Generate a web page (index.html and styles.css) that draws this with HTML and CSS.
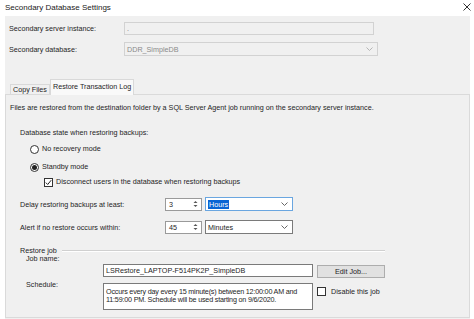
FILE: index.html
```html
<!DOCTYPE html>
<html lang="en">
<head>
    <meta charset="UTF-8">
    <title>Secondary Database Settings</title>
    <link rel="stylesheet" href="styles.css">
</head>
<body>
    <div class="titlebar">
        <span class="title">Secondary Database Settings</span>
        <svg class="close" width="8" height="8" viewBox="0 0 8 8">
            <path d="M0.5 0.5 L7.5 7.5 M7.5 0.5 L0.5 7.5" stroke="#333" stroke-width="1"/>
        </svg>
    </div>

    <div class="dialog">
        <div class="top">
            <div class="field-row">
                <label class="field-label">Secondary server instance:</label>
                <div class="textbox disabled wide">.</div>
            </div>
            <div class="field-row second">
                <label class="field-label">Secondary database:</label>
                <div class="combo disabled wider">
                    <span>DDR_SimpleDB</span>
                    <svg class="chev" width="7" height="4" viewBox="0 0 7 4"><path d="M0.5 0.5 L3.5 3.5 L6.5 0.5" fill="none" stroke="#b5b5b5"/></svg>
                </div>
            </div>
        </div>

        <div class="tabs">
            <div class="tab">Copy Files</div>
            <div class="tab active">Restore Transaction Log</div>
        </div>

        <div class="panel">
            <div class="line intro">Files are restored from the destination folder by a SQL Server Agent job running on the secondary server instance.</div>
            <div class="line section">Database state when restoring backups:</div>

            <div class="line option radio-row first">
                <span class="radio"></span>
                <span>No recovery mode</span>
            </div>
            <div class="line option radio-row">
                <span class="radio checked"></span>
                <span>Standby mode</span>
            </div>
            <div class="line option check-row">
                <span class="checkbox">
                    <svg width="7" height="7" viewBox="0 0 7 7"><path d="M0.8 3.6 L2.7 5.5 L6.2 1.2" fill="none" stroke="#222" stroke-width="1"/></svg>
                </span>
                <span>Disconnect users in the database when restoring backups</span>
            </div>

            <div class="input-row delay">
                <label class="row-label">Delay restoring backups at least:</label>
                <div class="spinner">
                    <span>3</span>
                    <svg class="arrows" width="5" height="8" viewBox="0 0 5 8"><path d="M0.5 3 L2.5 1 L4.5 3 Z M0.5 5 L2.5 7 L4.5 5 Z" fill="#555"/></svg>
                </div>
                <div class="combo focused unit">
                    <span class="selected">Hours</span>
                    <svg class="chev" width="7" height="4" viewBox="0 0 7 4"><path d="M0.5 0.5 L3.5 3.5 L6.5 0.5" fill="none" stroke="#666"/></svg>
                </div>
            </div>
            <div class="input-row alert">
                <label class="row-label">Alert if no restore occurs within:</label>
                <div class="spinner">
                    <span>45</span>
                    <svg class="arrows" width="5" height="8" viewBox="0 0 5 8"><path d="M0.5 3 L2.5 1 L4.5 3 Z M0.5 5 L2.5 7 L4.5 5 Z" fill="#555"/></svg>
                </div>
                <div class="combo unit">
                    <span>Minutes</span>
                    <svg class="chev" width="7" height="4" viewBox="0 0 7 4"><path d="M0.5 0.5 L3.5 3.5 L6.5 0.5" fill="none" stroke="#666"/></svg>
                </div>
            </div>

            <div class="group-head">
                <span>Restore job</span>
                <span class="rule"></span>
            </div>

            <div class="job-row">
                <label class="job-label">Job name:</label>
                <div class="textbox job-name">LSRestore_LAPTOP-F514PK2P_SimpleDB</div>
                <button class="btn">Edit Job...</button>
            </div>
            <div class="job-row schedule-row">
                <label class="job-label">Schedule:</label>
                <div class="textbox schedule">Occurs every day every 15 minute(s) between 12:00:00 AM and<br>11:59:00 PM. Schedule will be used starting on 9/6/2020.</div>
                <div class="disable">
                    <span class="checkbox"></span>
                    <span>Disable this job</span>
                </div>
            </div>
        </div>
    </div>
</body>
</html>
```

FILE: styles.css
```css
body {
    margin: 0;
    background: #ffffff;
    font-family: "Liberation Sans", Arial, sans-serif;
    font-size: 7.2px;
    color: #1e1e1e;
    width: 474px;
    height: 319px;
    overflow: hidden;
}
.titlebar {
    height: 16px;
    display: flex;
    justify-content: space-between;
    align-items: center;
    padding: 0 3px 2px 5px;
    box-sizing: border-box;
}
.title {
    font-size: 8px;
    color: #222;
}
.close {
    display: block;
}
.dialog {
    background: #f0f0f0;
    margin: 0 4px 0 5px;
    height: 303px;
    padding-top: 6px;
    box-sizing: border-box;
}
.top {
    padding-left: 4px;
}
.field-row {
    display: flex;
    align-items: center;
}
.field-row.second {
    margin-top: 7px;
}
.field-label {
    width: 115px;
}
.textbox {
    border: 1px solid #7a7a7a;
    background: #fff;
    height: 13px;
    box-sizing: border-box;
    padding: 0 2px;
    line-height: 11px;
    white-space: nowrap;
}
.textbox.disabled {
    border-color: #d2d2d2;
    background: #f0f0f0;
    color: #777;
}
.wide {
    width: 250px;
}
.combo {
    display: flex;
    align-items: center;
    justify-content: space-between;
    height: 14px;
    border: 1px solid #7a7a7a;
    background: #fff;
    box-sizing: border-box;
    padding: 0 4px 0 2px;
}
.combo.disabled {
    border-color: #d2d2d2;
    background: #f0f0f0;
    color: #8a8a8a;
}
.wider {
    width: 254px;
}
.chev {
    display: block;
}
.tabs {
    display: flex;
    align-items: flex-end;
    margin-top: 23px;
    padding-left: 5px;
    height: 15px;
}
.tab {
    height: 10px;
    line-height: 10px;
    padding: 0 2px;
    border: 1px solid #d9d9d9;
    border-bottom: none;
    white-space: nowrap;
    box-sizing: border-box;
}
.tab.active {
    height: 16px;
    line-height: 13px;
    background: #f9f9f9;
    padding: 0 2px;
    position: relative;
    top: 1px;
}
.panel {
    border: 1px solid #dadada;
    height: 224px;
    width: 465px;
    box-sizing: border-box;
}
.line {
    height: 10px;
    line-height: 10px;
    white-space: nowrap;
}
.intro {
    margin-top: 8px;
    padding-left: 4px;
}
.section {
    margin-top: 15px;
    padding-left: 14px;
}
.option {
    display: flex;
    align-items: center;
    gap: 3px;
}
.radio-row {
    padding-left: 24px;
    margin-top: 8px;
}
.radio-row.first {
    margin-top: 6px;
}
.radio {
    width: 9px;
    height: 9px;
    border: 1px solid #333;
    border-radius: 50%;
    background: #fff;
    box-sizing: border-box;
    display: flex;
    align-items: center;
    justify-content: center;
}
.radio.checked::after {
    content: "";
    width: 5px;
    height: 5px;
    border-radius: 50%;
    background: #222;
}
.check-row {
    padding-left: 38px;
    margin-top: 5px;
}
.checkbox {
    width: 9px;
    height: 9px;
    border: 1px solid #333;
    background: #fff;
    box-sizing: border-box;
    display: flex;
    align-items: center;
    justify-content: center;
    flex: none;
}
.checkbox svg {
    display: block;
}
.input-row {
    display: flex;
    align-items: center;
    padding-left: 14px;
    height: 14px;
}
.delay {
    margin-top: 10px;
}
.alert {
    margin-top: 9px;
}
.row-label {
    width: 145px;
}
.spinner {
    width: 37px;
    height: 13px;
    border: 1px solid #9a9a9a;
    background: #fff;
    box-sizing: border-box;
    display: flex;
    align-items: center;
    justify-content: space-between;
    padding: 0 3px 0 3px;
    margin-right: 3px;
}
.arrows {
    display: block;
}
.unit {
    width: 88px;
}
.combo.focused {
    border-color: #6aa6e0;
}
.selected {
    background: #0a64d4;
    color: #fff;
    padding: 0 1px;
    line-height: 9px;
}
.group-head {
    display: flex;
    align-items: center;
    gap: 5px;
    margin-top: 13px;
    margin-left: 14px;
    width: 365px;
    height: 8px;
    line-height: 8px;
}
.rule {
    flex: 1;
    border-top: 1px solid #d0d0d0;
    border-bottom: 1px solid #fff;
}
.job-row {
    display: flex;
    align-items: flex-start;
    padding-left: 20px;
}
.job-label {
    width: 77px;
    line-height: 8px;
    flex: none;
}
.job-name {
    width: 210px;
    margin-top: 9px;
}
.btn {
    margin: 10px 0 0 4px;
    width: 68px;
    height: 13px;
    padding: 0;
    font: inherit;
    color: #1e1e1e;
    background: #e1e1e1;
    border: 1px solid #adadad;
}
.schedule-row {
    margin-top: 2px;
}
.job-label + .schedule {
    margin-top: 3px;
}
.schedule {
    width: 210px;
    height: 27px;
    line-height: 7.5px;
    padding: 4px 2px;
    letter-spacing: -0.2px;
    white-space: nowrap;
}
.schedule-row .job-label {
    margin-top: 1px;
}
.disable {
    display: flex;
    align-items: center;
    gap: 5px;
    margin: 7px 0 0 4px;
}
```
